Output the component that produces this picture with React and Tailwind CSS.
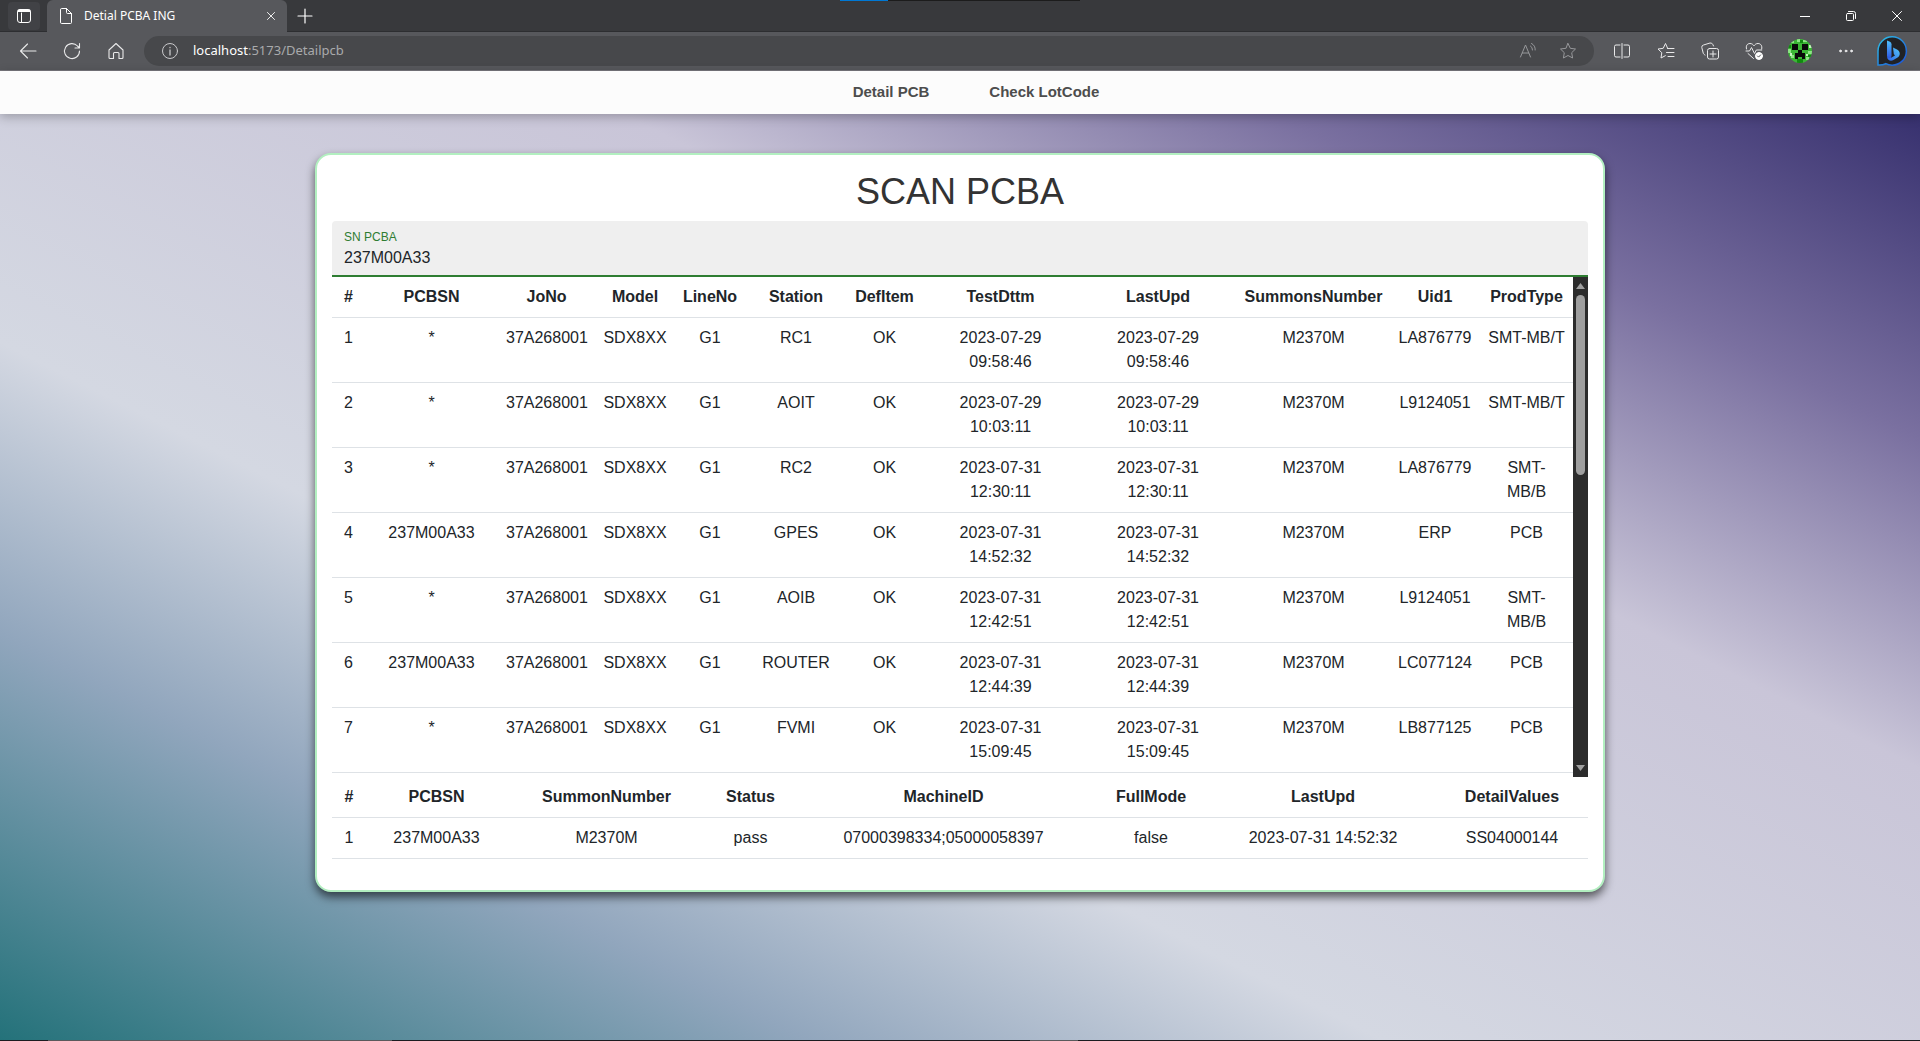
const columns = [
  { name: "#", width: "w-[33px]" },
  { name: "PCBSN", width: "w-[133px]" },
  { name: "JoNo", width: "w-[97px]" },
  { name: "Model", width: "w-[80px]" },
  { name: "LineNo", width: "w-[70px]" },
  { name: "Station", width: "w-[102px]" },
  { name: "DefItem", width: "w-[75px]" },
  { name: "TestDttm", width: "w-[157px]" },
  { name: "LastUpd", width: "w-[158px]" },
  { name: "SummonsNumber", width: "w-[153px]" },
  { name: "Uid1", width: "w-[90px]" },
  { name: "ProdType", width: "w-[93px]" },
];

const rows = [
  ["*", "RC1", "2023-07-29 09:58:46", "LA876779", "SMT-MB/T"],
  ["*", "AOIT", "2023-07-29 10:03:11", "L9124051", "SMT-MB/T"],
  ["*", "RC2", "2023-07-31 12:30:11", "LA876779", "SMT-\nMB/B"],
  ["237M00A33", "GPES", "2023-07-31 14:52:32", "ERP", "PCB"],
  ["*", "AOIB", "2023-07-31 12:42:51", "L9124051", "SMT-\nMB/B"],
  ["237M00A33", "ROUTER", "2023-07-31 12:44:39", "LC077124", "PCB"],
  ["*", "FVMI", "2023-07-31 15:09:45", "LB877125", "PCB"],
];

const machineColumns = [
  { name: "#", width: "w-[34px]", value: "1" },
  { name: "PCBSN", width: "w-[141px]", value: "237M00A33" },
  { name: "SummonNumber", width: "w-[199px]", value: "M2370M" },
  { name: "Status", width: "w-[89px]", value: "pass" },
  { name: "MachineID", width: "w-[297px]", value: "07000398334;05000058397" },
  { name: "FullMode", width: "w-[118px]", value: "false" },
  { name: "LastUpd", width: "w-[226px]", value: "2023-07-31 14:52:32" },
  { name: "DetailValues", width: "w-[152px]", value: "SS04000144" },
];

function Icon({ size = 18, className = "", children, ...rest }) {
  return (
    <svg
      width={size}
      height={size}
      viewBox="0 0 18 18"
      fill="none"
      stroke="currentColor"
      strokeLinecap="round"
      strokeLinejoin="round"
      className={className}
      aria-hidden="true"
      {...rest}
    >
      {children}
    </svg>
  );
}

function ChromeButton({ label, className = "", children }) {
  return (
    <button type="button" aria-label={label} className={`flex shrink-0 items-center justify-center ${className}`}>
      {children}
    </button>
  );
}

function TabBar() {
  return (
    <div className="relative flex h-8 items-stretch bg-[#38393c] shadow-[inset_0_-1px_0_#2d2e31]">
      <div className="absolute top-0 left-[840px] flex h-px w-60">
        <div className="w-12 bg-[#0078d4]" />
        <div className="grow bg-[#1c1c1c]" />
      </div>
      <ChromeButton label="Tab actions" className="mt-0.5 ml-2 h-7 w-8 rounded-sm bg-[#414246] text-white">
        <Icon size={18}>
          <rect x="2.5" y="2.5" width="13" height="13" rx="2.5" />
          <path d="M3 4.5h12M6.5 6v9" />
          <path d="M3.5 3.5h11" strokeWidth="2" />
        </Icon>
      </ChromeButton>
      <div className="ml-[7px] flex w-60 items-center rounded-t-md bg-[#57585c] pr-2 pl-2.5 text-white">
        <Icon size={18}>
          <path d="M3.5 2.5a1 1 0 0 1 1-1h5l5 5v9a1 1 0 0 1-1 1h-9a1 1 0 0 1-1-1zM9.5 1.5v4a1 1 0 0 0 1 1h4" />
        </Icon>
        <span className="ml-[9px] grow text-xs">Detial PCBA ING</span>
        <ChromeButton label="Close tab" className="size-4">
          <Icon size={16}>
            <path d="M5 5l8 8M13 5l-8 8" />
          </Icon>
        </ChromeButton>
      </div>
      <ChromeButton label="New tab" className="ml-2 w-5 text-white">
        <Icon size={18}>
          <path d="M9 2v14M2 9h14" strokeWidth="1.2" />
        </Icon>
      </ChromeButton>
      <div className="grow" />
      <ChromeButton label="Minimize" className="w-[46px] text-white">
        <Icon size={18}>
          <path d="M4 9.5h10" strokeLinecap="butt" />
        </Icon>
      </ChromeButton>
      <ChromeButton label="Restore" className="w-[46px] text-white">
        <Icon size={18}>
          <rect x="4.5" y="6.5" width="7" height="7" rx="1" />
          <path d="M6.5 4.5h5a2 2 0 0 1 2 2v5" />
        </Icon>
      </ChromeButton>
      <ChromeButton label="Close" className="w-[46px] text-white">
        <Icon size={18}>
          <path d="M4.5 4.5l9 9M13.5 4.5l-9 9" />
        </Icon>
      </ChromeButton>
    </div>
  );
}

function CreeperAvatar() {
  return (
    <svg width="24" height="24" viewBox="0 0 24 24" aria-hidden="true">
      <defs>
        <clipPath id="avatar">
          <circle cx="12" cy="12" r="12" />
        </clipPath>
      </defs>
      <g clipPath="url(#avatar)">
        <path fill="#3cb536" d="M0 0h24v24H0z" />
        <path fill="#8ee486" d="M2 2h4v2H2zM9 0h3v3H9zM15 1h4v2h-4zM0 10h3v4H0zM20 12h4v3h-4zM3 16h3v3H3zM18 18h3v3h-3z" />
        <path fill="#c5f2c0" d="M21 6h3v3h-3zM2 14h2v3H2zM18 15h2v2h-2z" />
        <path fill="#118a10" d="M0 6h3v3H0zM12 1h3v3h-3zM20 16h4v2h-4zM9 20h6v4H9z" />
        <path fill="#0a0a0a" d="M4 5h6v6H4zM14 5h6v6h-6zM10 11h4v3h3v6h-3v-2h-4v2H7v-6h3z" />
      </g>
    </svg>
  );
}

function BingLogo() {
  return (
    <svg width="32" height="32" viewBox="0 0 32 32" aria-hidden="true">
      <defs>
        <linearGradient id="bingRing" x1="0" y1="0" x2="1" y2="1">
          <stop offset="0" stopColor="#2fc3e8" />
          <stop offset="1" stopColor="#1b4fd8" />
        </linearGradient>
        <linearGradient id="bingStem" x1="0" y1="0" x2="0" y2="1">
          <stop offset="0" stopColor="#4fc0fa" />
          <stop offset="1" stopColor="#2b50e0" />
        </linearGradient>
        <linearGradient id="bingBowl" x1="1" y1="0" x2="0" y2="1">
          <stop offset="0" stopColor="#55c8fa" />
          <stop offset="1" stopColor="#2b62e8" />
        </linearGradient>
      </defs>
      <path
        d="M2 30V16A14.2 14.2 0 1 1 16 30.200c-2.500 0-4.500-.6-6.200-1.500Q6 30.500 2 30z"
        fill="#212225"
        stroke="url(#bingRing)"
        strokeWidth="1.500"
      />
      <path d="M11 5.500l3 1.300q1.500.8 1.500 2.500v11.500l-1 4q-3.500-.5-3.500-4z" fill="url(#bingStem)" />
      <path
        d="M17 12.500l4 1.900c3.500 1.800 3.500 5.800 1 7.800l-5 3c-2.500 1.200-5.500 0-6-3.200 1.500 1.800 3 1.300 4.500.5l3.500-2-1.200-1.500z"
        fill="url(#bingBowl)"
      />
    </svg>
  );
}

function Toolbar() {
  return (
    <div className="flex h-[39px] items-center border-b border-[#77767c] bg-[#57585c] text-[#e9e9ea]">
      <ChromeButton label="Back" className="ml-1.5 w-11">
        <Icon>
          <path d="M17 9H1.500M8.500 2L1.500 9l7 7" strokeWidth="1.100" />
        </Icon>
      </ChromeButton>
      <ChromeButton label="Refresh" className="w-11">
        <Icon>
          <path d="M16.500 9A7.500 7.500 0 1 1 14.500 4l2 2M16.500 1.500V6H12" strokeWidth="1.100" />
        </Icon>
      </ChromeButton>
      <ChromeButton label="Home" className="w-11">
        <Icon>
          <path
            d="M2 8l7-6.500L16 8v7.500a1 1 0 0 1-1 1h-3v-5a1 1 0 0 0-1-1H7.500a1 1 0 0 0-1 1v5H3a1 1 0 0 1-1-1z"
            strokeWidth="1.100"
          />
        </Icon>
      </ChromeButton>
      <div className="ml-1.5 flex h-[30px] grow items-center rounded-full bg-[#47484b] pr-[13px] pl-[17px]">
        <Icon className="shrink-0 text-[#c9c9cb]">
          <circle cx="9" cy="9" r="7.500" />
          <path d="M9 8v5M9 5.500v.2" strokeWidth="1.300" />
        </Icon>
        <a href="#" className="ml-3.5 text-[13px] text-[#a9aaac]">
          <span className="text-white">localhost</span>:5173/Detailpcb
        </a>
        <div className="grow" />
        <ChromeButton label="Read aloud" className="mr-[22px] text-[#97989b]">
          <Icon>
            <path d="M1.500 15L6.500 3l5 12M3.300 11h6.400M11.500 4q2 1 2 4M12.500 1.500q4 2 3.700 6.500" />
          </Icon>
        </ChromeButton>
        <ChromeButton label="Add to favorites" className="mr-1 text-[#97989b]">
          <Icon>
            <path d="M9 1.500l2.300 4.800 5.200.7-3.800 3.700.9 5.300L9 13.500 4.400 16l.9-5.300L1.500 7l5.200-.7z" />
          </Icon>
        </ChromeButton>
      </div>
      <ChromeButton label="Split screen" className="ml-1.5 w-11">
        <Icon>
          <path d="M7 3H3a1.500 1.500 0 0 0-1.500 1.500v9A1.500 1.500 0 0 0 3 15h4M11 3h4a1.500 1.500 0 0 1 1.500 1.500v9A1.500 1.500 0 0 1 15 15h-4M9 1.500v15" />
        </Icon>
      </ChromeButton>
      <ChromeButton label="Favorites" className="w-11">
        <Icon>
          <path d="M10.500 6L8.500 1.500 6.200 6.300 1 7l3.800 3.700L4 16l4.300-2.300M10.500 6.500h6.500M9.500 10.500h7.500M11 14.500h6" />
        </Icon>
      </ChromeButton>
      <ChromeButton label="Collections" className="w-11">
        <Icon>
          <rect x="6.500" y="6.500" width="11" height="10.500" rx="2" />
          <path d="M12 9v6M9 12h6M4 13C3 12.500 2.500 12 2.200 11L.8 5.500Q.5 3.500 2.500 3L9 1q2-.3 2.800 1.500L12.500 4" />
        </Icon>
      </ChromeButton>
      <ChromeButton label="Browser essentials" className="w-11">
        <Icon>
          <path d="M1.500 7C.5 3.500 2.500 1.500 5 1.500c2 0 3 1 4 2.300 1-1.300 2-2.300 4-2.300 2.500 0 4.500 2 3.700 5.500M1 9h3.500l2-3.500 3 6 1.800-3.500h5.500M3 11.500l5.500 5" />
          <circle cx="14" cy="14" r="3.500" fill="#ffffff" stroke="#ffffff" />
          <path d="M12.500 14l1.100 1.100 2-2.200" stroke="#57585c" />
        </Icon>
      </ChromeButton>
      <ChromeButton label="Profile" className="ml-0.5 w-11">
        <CreeperAvatar />
      </ChromeButton>
      <ChromeButton label="Settings and more" className="ml-0.5 w-11">
        <Icon fill="currentColor">
          <circle cx="3.500" cy="9" r="0.900" />
          <circle cx="9" cy="9" r="0.900" />
          <circle cx="14.500" cy="9" r="0.900" />
        </Icon>
      </ChromeButton>
      <ChromeButton label="Discover" className="mr-3 ml-2 w-8">
        <BingLogo />
      </ChromeButton>
    </div>
  );
}

function Cell({ children }) {
  return <td className="p-2 align-top">{children}</td>;
}

export default function App() {
  return (
    <div className="flex min-h-screen flex-col font-['Liberation_Sans',Arial,sans-serif] text-[#212529]">
      <header className="font-['Noto_Sans','Open_Sans',sans-serif]">
        <TabBar />
        <Toolbar />
      </header>

      <div className="flex grow flex-col bg-[linear-gradient(to_top_right,#24727a_0%,#91a6bd_21%,#d4d8e2_36%,#c9c5d8_64%,#7a70a0_81%,#2e2868_100%)]">
        <nav className="flex h-[43px] items-center justify-center gap-[60px] bg-[#fcfcfc] pl-8 text-[15px] font-bold text-[#4d4d4d] shadow-[0_3px_10px_rgba(0,0,0,0.25)]">
          <a href="#">Detail PCB</a>
          <a href="#">Check LotCode</a>
        </nav>

        <main className="mx-auto mt-[39px] mb-12 w-[calc(100%-630px)] min-w-[1290px] rounded-2xl border-2 border-[#b2efc0] bg-white px-[15px] pt-3 pb-[31px] shadow-[0_5px_10px_rgba(0,0,0,0.6)]">
          <h1 className="h-[54px] text-center text-4xl leading-[50px] text-[#333333]">SCAN PCBA</h1>

          <div className="flex h-14 flex-col rounded-t border-b-2 border-[#2e7d32] bg-[#efefef] px-3 pt-[7px]">
            <label htmlFor="sn" className="text-xs leading-[18px] text-[#2e7d32]">
              SN PCBA
            </label>
            <input id="sn" defaultValue="237M00A33" className="h-6 w-full bg-transparent text-base outline-none" />
          </div>

          <div className="flex h-[500px]">
            <div className="grow overflow-hidden">
              <table className="w-full table-fixed text-center text-base">
                <thead>
                  <tr className="border-b border-[#dee2e6]">
                    {columns.map((c) => (
                      <th key={c.name} className={`${c.width} px-0 py-2 font-bold`}>
                        {c.name}
                      </th>
                    ))}
                  </tr>
                </thead>
                <tbody>
                  {rows.map(([sn, station, time, uid, type], i) => (
                    <tr key={time} className="h-[65px] border-b border-[#dee2e6]">
                      <Cell>{i + 1}</Cell>
                      <Cell>{sn}</Cell>
                      <Cell>37A268001</Cell>
                      <Cell>SDX8XX</Cell>
                      <Cell>G1</Cell>
                      <Cell>{station}</Cell>
                      <Cell>OK</Cell>
                      <td className="px-8 py-2 align-top">{time}</td>
                      <td className="px-8 py-2 align-top">{time}</td>
                      <Cell>M2370M</Cell>
                      <Cell>{uid}</Cell>
                      <td className="px-1 py-2 align-top whitespace-pre-line">{type}</td>
                    </tr>
                  ))}
                </tbody>
              </table>
            </div>
            <div className="flex w-[15px] shrink-0 flex-col items-center bg-[#2c2c2c] py-1.5">
              <svg width="9" height="6" viewBox="0 0 9 6" fill="#9f9f9f" aria-hidden="true">
                <path d="M4.500 0L9 6H0z" />
              </svg>
              <div className="mt-1.5 h-[180px] w-[9px] rounded-full bg-[#9f9f9f]" />
              <div className="grow" />
              <svg width="9" height="6" viewBox="0 0 9 6" fill="#9f9f9f" aria-hidden="true">
                <path d="M0 0h9L4.500 6z" />
              </svg>
            </div>
          </div>

          <table className="w-full table-fixed text-center text-base">
            <thead>
              <tr className="border-b border-[#dee2e6]">
                {machineColumns.map((c) => (
                  <th key={c.name} className={`${c.width} px-0 py-2 font-bold`}>
                    {c.name}
                  </th>
                ))}
              </tr>
            </thead>
            <tbody>
              <tr className="border-b border-[#dee2e6]">
                {machineColumns.map((c) => (
                  <Cell key={c.name}>{c.value}</Cell>
                ))}
              </tr>
            </tbody>
          </table>
        </main>
      </div>

      <footer className="flex h-px bg-[#1c1c20] pl-12">
        <div className="w-[344px] bg-[#5a5a5c]" />
        <div className="ml-[638px] w-12 bg-[#5a5a5c]" />
      </footer>
    </div>
  );
}
